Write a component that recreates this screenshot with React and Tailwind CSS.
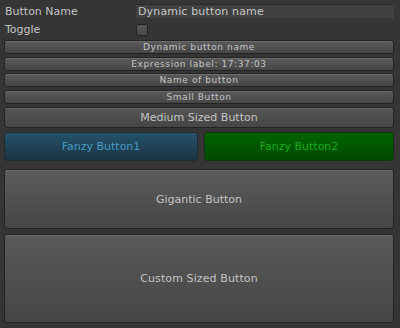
export default function App() {
  const btn =
    "flex items-center justify-center rounded-[3px] border border-[#232323] bg-gradient-to-b from-[#5a5a5a] to-[#464646] shadow-[inset_0_1px_0_rgba(255,255,255,0.12)] text-[#c4c4c4]";
  const mini = "h-[14px] text-[9px] leading-none tracking-[0.6px]";
  return (
    <div
      className="w-[400px] h-[328px] bg-[#353535] overflow-hidden flex flex-col pl-[4px] pr-[6px] pt-[4px]"
      style={{ fontFamily: '"DejaVu Sans", sans-serif' }}
    >
      <div className="flex items-center h-[14px]">
        <div className="w-[132px] pl-[1px] text-[11px] text-[#c4c4c4] leading-none">Button Name</div>
        <div className="flex-1 h-[14px] bg-[#414141] border-t border-[#2a2a2a] flex items-center pl-[2px] text-[11px] tracking-[0.15px] text-[#c8c8c8] leading-none">
          Dynamic button name
        </div>
      </div>
      <div className="flex items-center h-[16px] mt-[3px]">
        <div className="w-[132px] pl-[1px] text-[11px] text-[#c4c4c4] leading-none">Toggle</div>
        <div className="w-[12px] h-[12px] mt-[2px] rounded-[2px] border border-[#232323] bg-gradient-to-b from-[#585858] to-[#494949]" />
      </div>
      <div className={`${btn} ${mini} mt-[3px]`}>Dynamic button name</div>
      <div className={`${btn} ${mini} mt-[3px]`}>Expression label: 17:37:03</div>
      <div className={`${btn} ${mini} mt-[2px]`}>Name of button</div>
      <div className={`${btn} ${mini} mt-[3px]`}>Small Button</div>
      <div className={`${btn} h-[21px] mt-[3px] text-[11px] leading-none bg-gradient-to-b from-[#545454] to-[#434343]`}>Medium Sized Button</div>
      <div className="flex gap-[6px] mt-[4px] h-[29px]">
        <div className="w-[194px] flex items-center justify-center rounded-[3px] border border-[#1c2a31] bg-gradient-to-b from-[#24526a] to-[#1b3444] text-[11px] text-[#4a9ac4] leading-none">
          Fanzy Button1
        </div>
        <div className="flex-1 flex items-center justify-center rounded-[3px] border border-[#133113] bg-gradient-to-b from-[#006400] to-[#004a00] text-[11px] text-[#19ad19] leading-none">
          Fanzy Button2
        </div>
      </div>
      <div className={`${btn} h-[60px] mt-[8px] text-[11px] leading-none bg-gradient-to-b from-[#5c5c5c] to-[#424242]`}>Gigantic Button</div>
      <div className={`${btn} h-[89px] mt-[5px] text-[11px] tracking-[0.1px] leading-none bg-gradient-to-b from-[#595959] to-[#434343]`}>Custom Sized Button</div>
    </div>
  );
}
